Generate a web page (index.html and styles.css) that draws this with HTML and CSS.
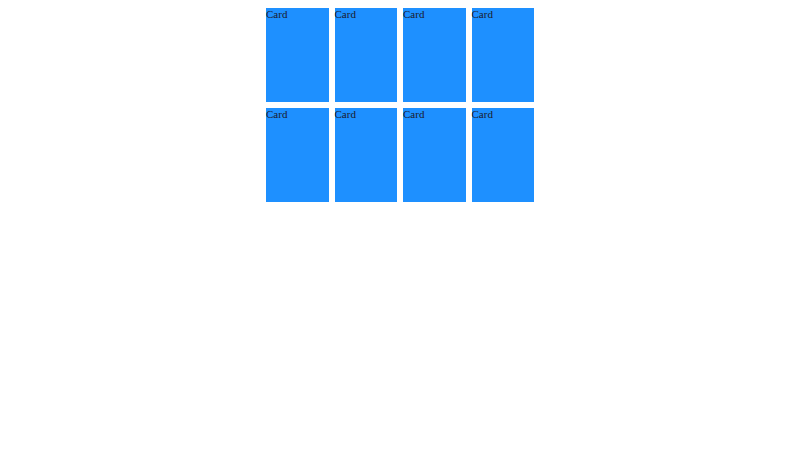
FILE: index.html
```html
<!DOCTYPE html>
<html lang="en">
<head>
    <meta charset="UTF-8">
    <meta name="viewport" content="width=device-width, initial-scale=1.0">
    <title>Cards</title>
    <link rel="stylesheet" href="styles.css">
</head>
<body>
    <div class="grid">
        <div class="card">Card</div>
        <div class="card">Card</div>
        <div class="card">Card</div>
        <div class="card">Card</div>
        <div class="card">Card</div>
        <div class="card">Card</div>
        <div class="card">Card</div>
        <div class="card">Card</div>
    </div>
</body>
</html>
```

FILE: styles.css
```css
body {
    margin: 8px;
    font-family: 'Liberation Serif', serif;
    background: #fff;
}

.grid {
    display: grid;
    grid-template-columns: repeat(4, 62.5px);
    grid-auto-rows: 94px;
    gap: 6px;
    justify-content: center;
}

.card {
    background-color: dodgerblue;
    color: #1a1a2e;
    font-size: 11px;
    line-height: 1;
    padding-top: 1px;
}
```
